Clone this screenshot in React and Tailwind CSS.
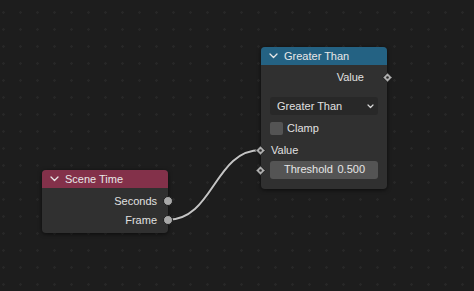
import React from "react";

function Chevron({ small = false }) {
  return small ? (
    <svg width="7" height="5" viewBox="0 0 7 5" className="block">
      <path d="M1 1 L3.5 3.5 L6 1" fill="none" stroke="#d8d8d8" strokeWidth="1.2" strokeLinecap="round" strokeLinejoin="round" />
    </svg>
  ) : (
    <svg width="9" height="6" viewBox="0 0 9 6" className="block">
      <path d="M1 1 L4.5 4.5 L8 1" fill="none" stroke="#e8e8e8" strokeWidth="1.3" strokeLinecap="round" strokeLinejoin="round" />
    </svg>
  );
}

function Diamond() {
  return (
    <svg width="11" height="11" viewBox="0 0 11 11" className="block">
      <path d="M5.5 0.8 L10.2 5.5 L5.5 10.2 L0.8 5.5 Z" fill="#b0b0b0" stroke="#1a1a1a" strokeWidth="1" />
      <circle cx="5.5" cy="5.5" r="1.3" fill="#2a2a2a" />
    </svg>
  );
}

function Circle() {
  return <div className="w-[10px] h-[10px] rounded-full bg-[#a8a8a8] border border-[#1c1c1c]" />;
}

export default function App() {
  return (
    <div
      className="relative w-[474px] h-[291px] overflow-hidden bg-[#1d1d1d] bg-[radial-gradient(circle,#272727_1px,transparent_1.5px)] bg-[length:17px_17px] bg-[position:-5px_4px]"
      style={{ fontFamily: '"Liberation Sans", Arial, sans-serif' }}
    >
      <svg className="absolute inset-0" width="474" height="291">
        <path d="M167 220 C 214 220, 214 150, 261 150" fill="none" stroke="#1a1a1a" strokeWidth="3.5" />
        <path d="M167 220 C 214 220, 214 150, 261 150" fill="none" stroke="#c4c4c4" strokeWidth="2" />
      </svg>

      {/* Scene Time node */}
      <div className="absolute left-[42px] top-[170px] w-[126px] h-[63px] rounded-[4px] bg-[#303030] shadow-[0_1px_4px_rgba(0,0,0,0.6)]">
        <div className="h-[18px] rounded-t-[4px] bg-[#83314a] flex items-center pl-[8px] gap-[6px] text-[11px] text-[#e8e8e8]">
          <Chevron />
          <span>Scene Time</span>
        </div>
        <div className="flex flex-col items-end pr-[11px] pt-[8px] gap-[8px] text-[11px] text-[#e0e0e0] leading-[11px]">
          <span>Seconds</span>
          <span>Frame</span>
        </div>
        <div className="absolute right-[-5px] top-[26px]"><Circle /></div>
        <div className="absolute right-[-5px] top-[45px]"><Circle /></div>
      </div>

      {/* Greater Than node */}
      <div className="absolute left-[261px] top-[47px] w-[126px] h-[142px] rounded-[4px] bg-[#303030] shadow-[0_1px_4px_rgba(0,0,0,0.6)]">
        <div className="h-[18px] rounded-t-[4px] bg-[#246283] flex items-center pl-[8px] gap-[6px] text-[11px] text-[#e8e8e8]">
          <Chevron />
          <span>Greater Than</span>
        </div>
        <div className="flex flex-col">
          <div className="h-[11px] mt-[7px] flex justify-end pr-[23px] text-[11px] leading-[11px] text-[#e0e0e0]">Value</div>
          <div className="mx-[9px] mt-[14px] h-[18px] rounded-[3px] bg-[#282828] flex items-center justify-between pl-[7px] pr-[4px] text-[11px] text-[#e0e0e0]">
            <span>Greater Than</span>
            <Chevron small />
          </div>
          <div className="mx-[9px] mt-[5px] flex items-center gap-[4px] text-[11px] text-[#e0e0e0]">
            <div className="w-[13px] h-[13px] rounded-[2px] bg-[#545454]" />
            <span>Clamp</span>
          </div>
          <div className="mt-[8px] pl-[10px] h-[11px] text-[11px] leading-[11px] text-[#e0e0e0]">Value</div>
          <div className="mx-[9px] mt-[5px] h-[18px] rounded-[3px] bg-[#545454] flex items-center justify-between pl-[14px] pr-[13px] text-[11px] text-[#e6e6e6]">
            <span>Threshold</span>
            <span>0.500</span>
          </div>
        </div>
        <div className="absolute right-[-6px] top-[25px]"><Diamond /></div>
        <div className="absolute left-[-6px] top-[98px]"><Diamond /></div>
        <div className="absolute left-[-6px] top-[118px]"><Diamond /></div>
      </div>
    </div>
  );
}
